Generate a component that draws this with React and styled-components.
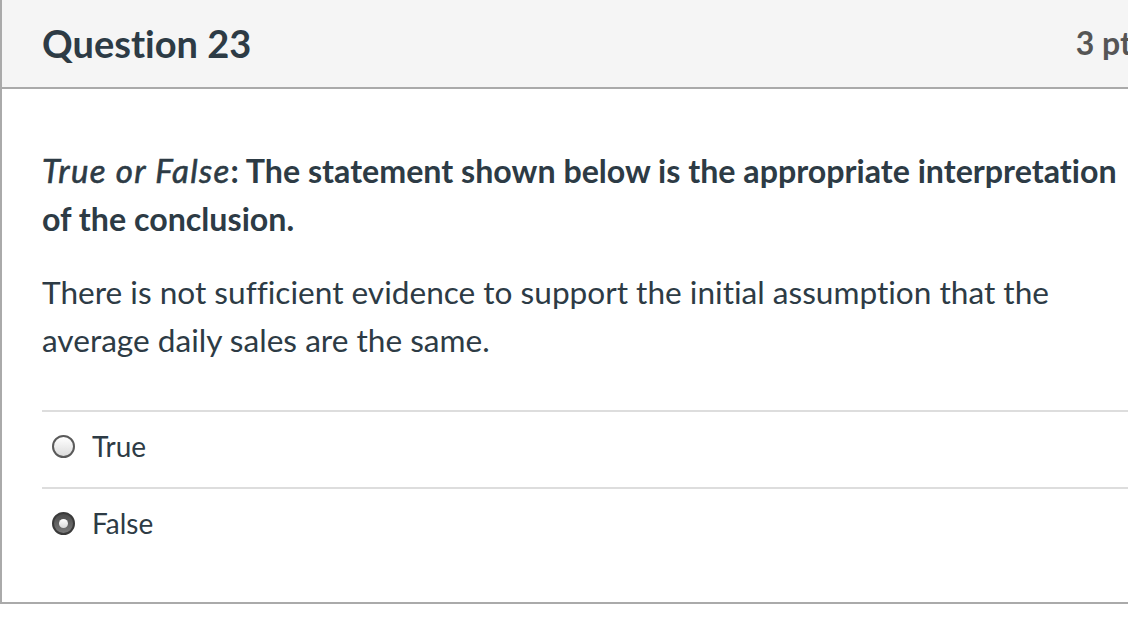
import styled, { createGlobalStyle } from "styled-components";

const GlobalStyle = createGlobalStyle`
  html, body {
    margin: 0;
    padding: 0;
    background: #fff;
    overflow: hidden;
  }
  body {
    font-family: Lato, "Open Sans", sans-serif;
    font-variant-ligatures: none;
    color: #2d3b45;
  }
`;

const StyledQuestion = styled.section`
  width: 1184px;
  border-left: 2px solid #aaaaaa;
  border-bottom: 2px solid #aaaaaa;

  .question__header {
    display: flex;
    align-items: center;
    justify-content: space-between;
    height: 85px;
    padding: 0 40px 2px;
    background: #f5f5f5;
    border-bottom: 2px solid #aaaaaa;
  }

  .question__title {
    margin: 0;
    font-size: 38px;
    font-weight: 700;
    color: #2d3b45;
  }

  .question__points {
    font-size: 32px;
    font-weight: 700;
    color: #555;
  }

  .question__body {
    padding: 57px 0 38px 40px;
  }

  .question__text {
    margin: 0 0 25px;
    padding-right: 40px;
    font-size: 31.6px;
    line-height: 48px;
  }

  .question__lead {
    font-weight: 700;
    font-size: 32.2px;

    em {
      font-style: italic;
      font-weight: 400;
      font-size: 33px;
      letter-spacing: 1.3px;
      -webkit-text-stroke: 0.6px #2d3b45;
    }
  }

  .question__answers {
    margin-top: 46px;
  }
`;

const AnswerRow = styled.label`
  display: flex;
  align-items: center;
  gap: 17px;
  box-sizing: border-box;
  height: 77px;
  padding: 0 0 7px 10px;
  border-top: 2px solid #dddddd;
  font-size: 28px;
  color: #2d3b45;
`;

const Radio = styled.span`
  position: relative;
  box-sizing: border-box;
  width: 23px;
  height: 23px;
  border-radius: 50%;
  border: 2px solid ${(p) => (p.$checked ? "#3a3a3a" : "#5a5a5a")};
  background: ${(p) =>
    p.$checked
      ? "linear-gradient(#4a4a4a, #7a7a7a)"
      : "linear-gradient(#ffffff, #dcdcdc)"};

  &::after {
    content: "";
    display: ${(p) => (p.$checked ? "block" : "none")};
    position: absolute;
    left: 50%;
    top: 50%;
    width: 9px;
    height: 9px;
    margin: -4.5px 0 0 -4.5px;
    border-radius: 50%;
    background: linear-gradient(#ffffff, #d8d8d8);
  }
`;

const answers = [
  { label: "True", checked: false },
  { label: "False", checked: true },
];

const App = () => {
  return (
    <>
      <GlobalStyle />
      <StyledQuestion>
        <div className="question__header">
          <h2 className="question__title">Question 23</h2>
          <span className="question__points">3 pts</span>
        </div>
        <div className="question__body">
          <p className="question__text question__lead">
            <em>True or False</em>: The statement shown below is the appropriate
            interpretation of the conclusion.
          </p>
          <p className="question__text">
            There is not sufficient evidence to support the initial assumption
            that the average daily sales are the same.
          </p>
          <div className="question__answers">
            {answers.map((a) => (
              <AnswerRow key={a.label}>
                <Radio $checked={a.checked} />
                {a.label}
              </AnswerRow>
            ))}
          </div>
        </div>
      </StyledQuestion>
    </>
  );
};

export default App;
